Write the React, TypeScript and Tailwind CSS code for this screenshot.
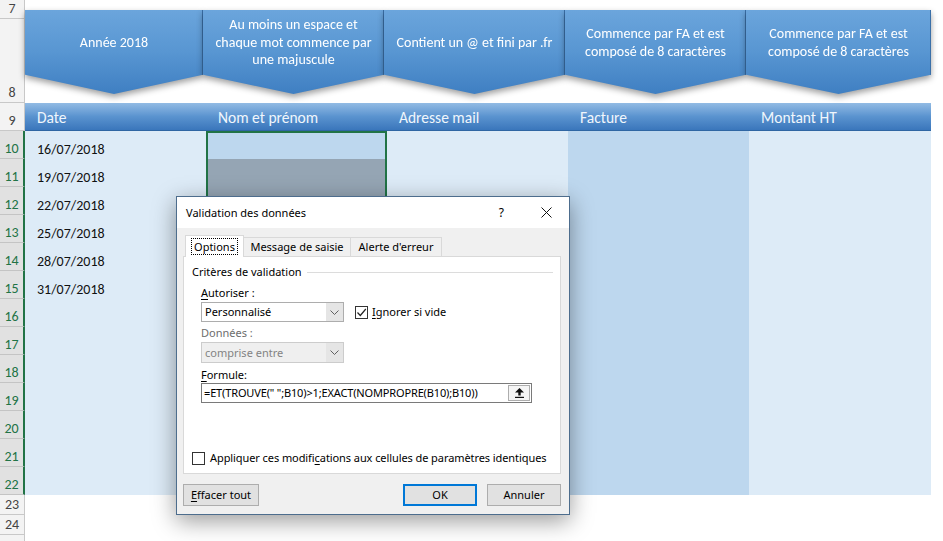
import React from 'react';

const rows = [
  { n: '7', h: 'h-[19px]', sel: false },
  { n: '8', h: 'h-[84px]', sel: false },
  { n: '9', h: 'h-[28px]', sel: false },
  ...[10, 11, 12, 13, 14, 15, 16, 17, 18, 19, 20, 21, 22].map((n) => ({ n: String(n), h: 'h-[28px]', sel: true })),
  { n: '23', h: 'h-[20px]', sel: false },
  { n: '24', h: 'h-[20px]', sel: false },
  { n: '', h: 'h-[20px]', sel: false },
];

const banners = [
  { w: 'w-[178px]', text: ['Année 2018'] },
  { w: 'w-[181px]', text: ['Au moins un espace et', 'chaque mot commence par', 'une majuscule'] },
  { w: 'w-[181px]', text: ['Contient un @ et fini par .fr'] },
  { w: 'w-[181px]', text: ['Commence par FA et est', 'composé de 8 caractères'] },
  { w: 'w-[185px]', text: ['Commence par FA et est', 'composé de 8 caractères'] },
];

const headers = ['Date', 'Nom et prénom', 'Adresse mail', 'Facture', 'Montant HT'];
const dates = ['16/07/2018', '19/07/2018', '22/07/2018', '25/07/2018', '28/07/2018', '31/07/2018'];

function Chevron() {
  return (
    <svg width="9" height="5" viewBox="0 0 9 5">
      <path d="M0.5 0.5 L4.5 4.5 L8.5 0.5" fill="none" stroke="#606060" strokeWidth="1" />
    </svg>
  );
}

function Dialog() {
  return (
    <div className="absolute left-[176px] top-[196px] w-[394px] h-[319px] border border-[#4d6d8d] bg-[#f0f0f0] shadow-[0_6px_22px_rgba(0,0,0,0.4)] flex flex-col font-['Segoe_UI','Noto_Sans',sans-serif] text-[11px] text-black leading-[16px]">
      {/* title bar */}
      <div className="h-[31px] shrink-0 bg-white flex items-center pl-[9px]">
        <span>Validation des données</span>
        <span className="ml-auto text-[12px]">?</span>
        <svg className="ml-[37px] mr-[17px]" width="11" height="11" viewBox="0 0 11 11">
          <path d="M0.5 0.5 L10.5 10.5 M10.5 0.5 L0.5 10.5" stroke="#111" strokeWidth="1" />
        </svg>
      </div>

      <div className="flex-1 flex flex-col pl-[6px] pr-[8px] pt-[7px]">
        {/* tabs */}
        <div className="flex items-end h-[21px] pl-[2px]">
          <div className="relative z-10 -mb-px w-[59px] h-[22px] bg-white border border-b-0 border-[#d9d9d9] flex items-start justify-center pt-[2px]">
            <span className="border border-dotted border-black px-[2px] leading-[15px]">Options</span>
          </div>
          <div className="w-[107px] h-[19px] bg-[#f0f0f0] border border-b-0 border-l-0 border-[#d9d9d9] flex items-center justify-center">
            Message de saisie
          </div>
          <div className="w-[91px] h-[19px] bg-[#f0f0f0] border border-b-0 border-l-0 border-[#d9d9d9] flex items-center justify-center">
            Alerte d'erreur
          </div>
        </div>

        {/* panel */}
        <div className="h-[218px] bg-white border border-[#d9d9d9] flex flex-col">
          <div className="mt-[7px] h-[16px] flex items-center pl-[8px] pr-[7px]">
            <span>Critères de validation</span>
            <div className="flex-1 h-px bg-[#dcdcdc] ml-[5px]" />
          </div>

          <div className="pl-[17px] flex flex-col">
            <div className="mt-[5px] h-[16px]">
              <span className="underline underline-offset-2">A</span>utoriser :
            </div>
            <div className="mt-px flex items-center">
              <div className="w-[143px] h-[20px] border border-[#adadad] bg-white flex items-center">
                <span className="flex-1 pl-[3px]">Personnalisé</span>
                <div className="w-[17px] h-full bg-[#e5e5e5] flex items-center justify-center">
                  <Chevron />
                </div>
              </div>
              <div className="ml-[11px] w-[13px] h-[13px] border border-[#333] bg-white flex items-center justify-center">
                <svg width="11" height="11" viewBox="0 0 11 11">
                  <path d="M1.5 5.5 L4.3 8.5 L9.8 2" fill="none" stroke="#222" strokeWidth="1.2" />
                </svg>
              </div>
              <span className="ml-[4px]">
                <span className="underline underline-offset-2">I</span>gnorer si vide
              </span>
            </div>

            <div className="mt-[3px] h-[16px] text-[#6d6d6d]">Données :</div>
            <div className="mt-px w-[143px] h-[21px] border border-[#cccccc] bg-[#efefef] flex items-center text-[#838383]">
              <span className="flex-1 pl-[3px]">comprise entre</span>
              <div className="w-[17px] h-full bg-[#e5e5e5] flex items-center justify-center">
                <Chevron />
              </div>
            </div>

            <div className="mt-[4px] h-[16px]">
              <span className="underline underline-offset-2">F</span>ormule:
            </div>
            <div className="w-[331px] h-[20px] border border-[#7a7a7a] bg-white flex items-center">
              <span className="flex-1 pl-[2px] tracking-[-0.15px]">=ET(TROUVE(" ";B10)&gt;1;EXACT(NOMPROPRE(B10);B10))</span>
              <div className="mr-px w-[22px] h-[16px] border border-[#adadad] bg-[#f5f5f5] flex items-center justify-center">
                <svg width="9" height="10" viewBox="0 0 9 10">
                  <path d="M0 4.5 L4.5 0 L9 4.5 Z" fill="#111" />
                  <rect x="3.3" y="4" width="2.4" height="3.5" fill="#111" />
                  <rect x="0" y="8.8" width="9" height="1.2" fill="#111" />
                </svg>
              </div>
            </div>
          </div>

          <div className="mt-auto mb-[7px] pl-[8px] h-[16px] flex items-center">
            <div className="w-[13px] h-[13px] border border-[#333] bg-white" />
            <span className="ml-[5px] tracking-[-0.08px]">
              Appliquer ces modifi<span className="underline underline-offset-2">c</span>ations aux cellules de paramètres identiques
            </span>
          </div>
        </div>

        {/* buttons */}
        <div className="mt-[10px] h-[22px] flex">
          <button className="w-[76px] h-full border border-[#adadad] bg-[#e1e1e1]">
            <span className="underline underline-offset-2">E</span>ffacer tout
          </button>
          <button className="ml-auto w-[74px] h-full border-2 border-[#0078d7] bg-[#e1e1e1]">OK</button>
          <button className="ml-[10px] w-[74px] h-full border border-[#adadad] bg-[#e1e1e1]">Annuler</button>
        </div>
      </div>
    </div>
  );
}

export default function App() {
  return (
    <div className="relative w-[943px] h-[541px] overflow-hidden bg-white flex font-['Calibri','Noto_Sans',sans-serif]">
      {/* row headers */}
      <div className="w-[25px] shrink-0 flex flex-col">
        {rows.map((r, i) => (
          <div
            key={i}
            className={
              r.sel
                ? `${r.h} shrink-0 flex items-end justify-center text-[14px] leading-[18px] bg-[#e1e1e1] text-[#217346] border-b border-b-[#c4c4c4] border-r-2 border-r-[#217346]`
                : `${r.h} shrink-0 flex items-end justify-center text-[14px] leading-[18px] bg-[#f3f3f3] text-[#444] border-b border-b-[#c8c8c8] border-r border-r-[#c8c8c8]`
            }
          >
            {r.n}
          </div>
        ))}
      </div>

      {/* sheet */}
      <div className="w-[906px] shrink-0 flex flex-col">
        {/* banners, rows 7-8 */}
        <div className="h-[103px] shrink-0 flex items-start pt-[10px]">
          {banners.map((b, i) => (
            <div key={i} className={`${b.w} h-[84px] drop-shadow-[0_3px_3px_rgba(0,0,0,0.38)]`}>
              <div className="h-full [clip-path:polygon(0_0,100%_0,100%_77%,50%_100%,0_77%)] bg-linear-to-b from-[#6ba5dc] via-[#5896d2] to-[#3f7fc2] shadow-[inset_-1px_0_0_#3b70a8]">
                <div className="h-[65px] flex flex-col items-center justify-center text-center text-white text-[14px] leading-[17.5px]">
                  {b.text.map((t) => (
                    <div key={t}>{t}</div>
                  ))}
                </div>
              </div>
            </div>
          ))}
        </div>

        {/* header, row 9 */}
        <div className="h-[28px] shrink-0 grid grid-cols-[181px_181px_181px_181px_182px] bg-linear-to-b from-[#92bbe4] via-[#5a93cf] to-[#3a76bb] border-b border-b-[#2f66a3] text-[#f0f6fc] text-[15.5px]">
          {headers.map((h) => (
            <div key={h} className="pl-[12px] flex items-center pt-[2px]">
              {h}
            </div>
          ))}
        </div>

        {/* data, rows 10-22 */}
        <div className="h-[364px] shrink-0 grid grid-cols-[181px_181px_181px_181px_182px] text-[14px] text-[#111]">
          <div className="bg-[#ddebf7] pl-[12px] flex flex-col">
            {dates.map((d) => (
              <div key={d} className="h-[28px] flex items-center pt-[10px] leading-[18px]">
                {d}
              </div>
            ))}
          </div>
          <div className="bg-[#95a5b4] border-2 border-[#217346] flex flex-col">
            <div className="h-[26px] bg-[#bdd7ee]" />
          </div>
          <div className="bg-[#ddebf7]" />
          <div className="bg-[#bdd7ee]" />
          <div className="bg-[#ddebf7]" />
        </div>

        <div className="flex-1 bg-white" />
      </div>

      <Dialog />
    </div>
  );
}
